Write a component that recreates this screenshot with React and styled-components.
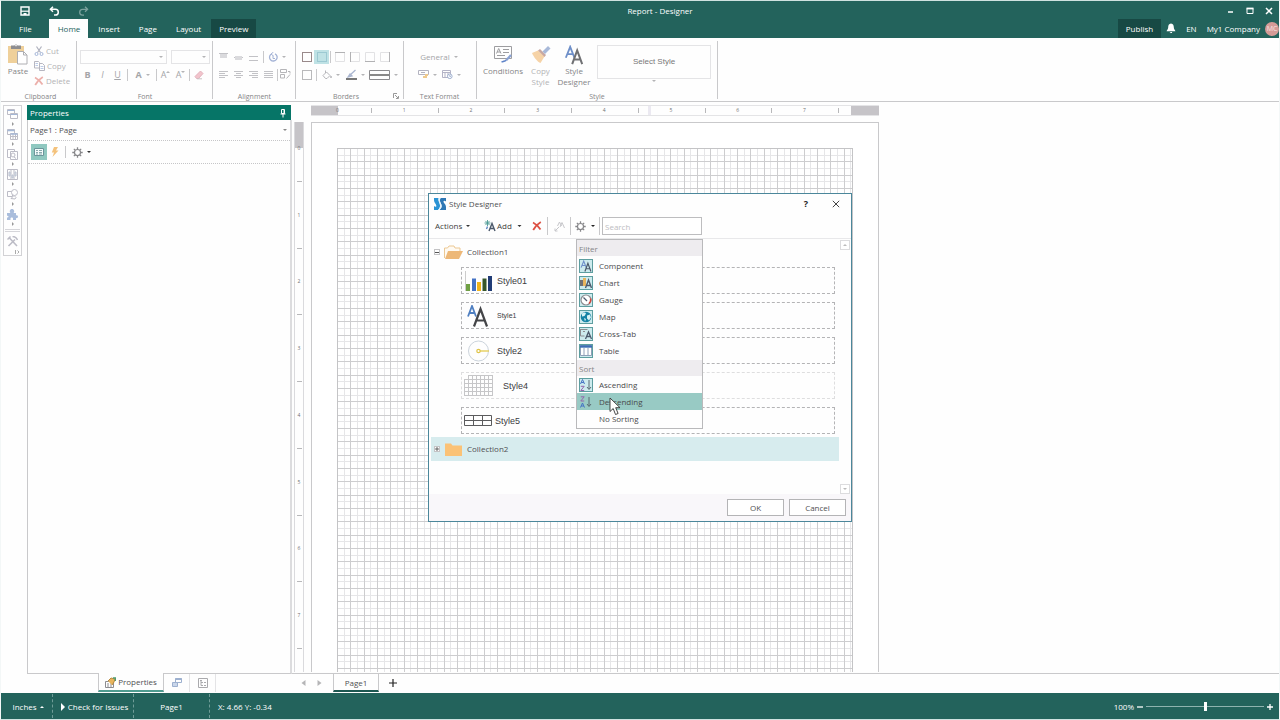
import React from "react";
import styled, { createGlobalStyle, css } from "styled-components";

const c = {
  brand: "#23635c",
  brandDark: "#174944",
  panel: "#067567",
  line: "#c9c9cb",
  soft: "#e4e4e6",
  text: "#505052",
  accent: "#8fc8c0",
  pale: "#d7ecee",
};

const Global = createGlobalStyle`
  *, *::before, *::after { box-sizing: border-box; }
  body { margin: 0; background: #fff; }
  body, button, input, select { font: 8px/10px "Open Sans", "Noto Sans", sans-serif; color: ${c.text}; }
  button { border: 0; padding: 0; background: none; display: inline-flex; align-items: center; justify-content: center; white-space: nowrap; }
  input, select { border-radius: 0; outline: 0; margin: 0; }
  svg { display: block; flex: none; }
  h1, h2, ul { margin: 0; padding: 0; font: inherit; list-style: none; }
`;

/* ---------- frame ---------- */
const Window = styled.div`
  display: flex; flex-direction: column; height: 100vh; min-height: 560px; overflow: hidden;
  border: 1px solid #cfe2e0; border-left-color: #f3f7f7; border-right-color: #f3f7f7; background: #fefefe;
`;
const Header = styled.header`background: ${c.brand}; color: #fff; flex: none;`;
const TitleBar = styled.div`
  display: grid; grid-template-columns: 1fr auto 1fr; align-items: center; height: 18px; padding-right: 4px; padding-left: 18px;
`;
const Quick = styled.div`display: flex; gap: 17px; padding-top: 2px;`;
const TitleBtn = styled.button`width: 12px; height: 14px; color: #fff; opacity: ${(p) => (p.$dim ? 0.4 : 1)};`;
const WinBtns = styled.div`display: flex; gap: 7px; justify-content: flex-end; padding-top: 2px;`;
const AppTitle = styled.h1`color: #fff; padding-left: 26px; padding-top: 2px;`;
const TabBar = styled.nav`display: flex; height: 19px; align-items: stretch;`;
const RibbonTab = styled.button`
  padding: 0 9px 0 10px; color: #fff; margin-right: ${(p) => (p.$file ? 8 : 0)}px; margin-left: ${(p) => (p.$file ? 8 : 0)}px;
  ${(p) => p.$active && css`background: #fefefe; color: ${c.brand}; padding: 0 8px 0 9px;`}
  ${(p) => p.$dark && css`background: ${c.brandDark}; padding: 0 8px; margin-left: 1px;`}
`;
const Account = styled.div`margin-left: auto; display: flex; align-items: center;`;
const Publish = styled.button`align-self: stretch; padding: 0 8px; background: ${c.brandDark}; color: #fff;`;
const AccountBtn = styled.button`color: #fff; padding: 0 5px;`;
const Avatar = styled.span`
  width: 14px; height: 14px; border-radius: 50%; background: #d49b97; color: #f8e4e2; font-size: 7px;
  display: grid; place-items: center;
`;

/* ---------- ribbon ---------- */
const Ribbon = styled.section`display: flex; height: 64px; border-bottom: 1px solid ${c.line}; flex: none;`;
const Group = styled.div`
  display: flex; flex-direction: column; width: ${(p) => p.$w}px; padding: ${(p) => p.$top ?? 11}px 2px 0 ${(p) => p.$left ?? 3}px; gap: 3px; position: relative;
`;
const GroupName = styled.div`
  margin-top: auto; display: flex; justify-content: center; font-size: 7px; line-height: 9px; color: #858587; position: relative;
  padding-right: ${(p) => p.$pr ?? 0}px;
`;
const Launcher = styled.button`position: absolute; right: 2px; top: 1px;`;
const GroupLine = styled.div`width: 1px; margin: 3px 0 2px; background: ${c.line};`;
const Row = styled.div`display: flex; align-items: center; height: 15px; gap: ${(p) => p.$gap ?? 0}px;`;
const Tool = styled.button`
  width: ${(p) => p.$w ?? 15}px; height: 14px; gap: ${(p) => p.$gap ?? 4}px; color: #a5a5a8; flex: none;
  background: ${(p) => (p.$on ? "#bfe2e5" : "none")};
`;
const Glyph = styled.span`font-size: ${(p) => p.$s ?? 9}px; font-weight: ${(p) => (p.$b ? 700 : 400)}; font-style: ${(p) => (p.$i ? "italic" : "normal")}; text-decoration: ${(p) => (p.$u ? "underline" : "none")};`;
const MiniLine = styled.span`width: 1px; height: 12px; background: ${c.line}; margin: 0 ${(p) => p.$m ?? 2}px; flex: none;`;
const Caret = styled.span`
  width: 0; height: 0; border: 2px solid transparent; border-bottom-width: 0; border-top-color: ${(p) => p.$c ?? "#b4b4b6"};
  ${(p) => p.$up && css`border-bottom: 2px solid ${p.$c ?? "#b4b4b6"}; border-top-width: 0;`}
  ${(p) => p.$right && css`border: 2px solid transparent; border-right-width: 0; border-left-color: ${p.$c};`}
  ${(p) => p.$high && css`margin-bottom: 6px;`}
`;
const SelectWrap = styled.label`
  display: flex; align-items: center; position: relative; width: ${(p) => p.$w ? p.$w + "px" : "100%"}; height: ${(p) => p.$h ?? 14}px;
  border: ${(p) => (p.$plain ? "0" : `1px solid ${c.soft}`)}; padding-right: 3px;
  select { appearance: none; border: 0; background: none; flex: 1; min-width: 0; padding: 0 0 0 2px; height: 100%; color: inherit; }
`;
const Clip = styled.div`display: flex; gap: ${(p) => p.$gap ?? 5}px;`;
const BigBtn = styled.button`
  flex-direction: column; justify-content: flex-start; width: ${(p) => p.$w}px; color: ${(p) => (p.$dim ? "#b3b3b5" : "#858587")};
  line-height: 11px; white-space: normal; align-self: flex-start;
`;
const ClipList = styled.div`display: flex; flex-direction: column; align-items: flex-start;`;
const ClipBtn = styled.button`height: 15px; gap: 2px; color: #b3b3b5;`;
const Gallery = styled.button`
  width: 114px; height: 34px; border: 1px solid ${c.soft}; font-family: "Liberation Sans", sans-serif; color: #777;
`;
const GalleryBox = styled.div`display: flex; flex-direction: column; align-items: center; gap: 1px; padding-left: 2px;`;

/* ---------- work area ---------- */
const Work = styled.main`display: flex; flex: 1; min-height: 0;`;
const ToolboxCol = styled.aside`width: 26px; padding: 3px 5px 0 2px;`;
const Toolbox = styled.div`
  display: flex; flex-direction: column; align-items: center; border: 1px solid #d2d2d5; width: 19px; min-height: 151px; padding-top: 3px;
`;
const BoxBtn = styled.button`width: 15px; height: ${(p) => (p.$last ? 14 : 20)}px; flex: none; flex-direction: column; gap: 2px; justify-content: flex-start;`;
const DoubleLine = styled.div`height: 3px; flex: none; width: 15px; border: 1px solid #d6d6da; border-left: 0; border-right: 0; margin-bottom: 4px;`;
const More = styled.button`align-self: flex-end; padding-right: 1px; margin-top: auto; padding-bottom: 1px;`;

const Side = styled.aside`width: 265px; padding-top: 3px; display: flex; flex-direction: column; flex: none;`;
const PanelBox = styled.section`flex: 1; border: 1px solid ${c.line}; border-top: 0; border-right: 2px solid #dcdcde;`;
const PanelTitle = styled.h2`
  display: flex; align-items: center; justify-content: space-between; height: 15px; background: ${c.panel}; color: #fff; padding: 1px 5px 0 3px; margin-right: 1px;
`;
const PanelRow = styled.div`display: flex; align-items: center; height: ${(p) => p.$h}px; border-bottom: 1px dotted #c6c6c8; padding-left: ${(p) => p.$pl ?? 0}px;`;
const ModeBtn = styled.button`width: 16px; height: 16px; background: ${(p) => (p.$on ? c.accent : "none")};`;
const SideTabs = styled.div`display: flex; height: 19px; padding-left: 71px; align-items: stretch;`;
const SideTab = styled.button`
  width: ${(p) => (p.$active ? 66 : 26)}px; gap: 2px; border-right: 1px solid ${c.soft}; height: 18px;
  ${(p) => p.$active && css`border: 1px solid ${c.line}; border-top: 0; border-bottom: 2px solid #4f9c90; background: #fefefe; height: 19px; margin-top: -1px; padding-top: 1px;`}
`;

const Canvas = styled.section`flex: 1; min-width: 0; display: flex; flex-direction: column;`;
const CanvasGrid = styled.div`
  flex: 1; min-height: 0; overflow: hidden; display: grid; grid-template-columns: 10px 568px; grid-template-rows: 11px 1fr;
  gap: 6px 7px; padding: 3px 0 1px 2px;
`;
const TopRuler = styled.div`grid-column: 2; border: 1px solid ${c.soft}; border-left: 0; border-right: 0; height: 11px; overflow: hidden;`;
const SideRuler = styled.div`border: 1px solid #dadadd; border-top: 0; border-bottom: 0; overflow: hidden;`;
const Sheet = styled.div`
  border: 1px solid ${c.line}; border-bottom: 0; padding: 25px 25px 0 25px; overflow: hidden; display: flex; background: #fff;
`;
const GridArea = styled.div`flex: 1; border: 1px solid #c4c4c6; border-bottom: 0;`;
const PageTabs = styled.div`
  display: flex; align-items: flex-start; height: 20px; border-top: 1px solid ${c.line}; padding-left: 8px;
`;
const PageTab = styled.button`
  width: 46px; height: 18px; border: 1px solid ${c.line}; border-top: 0; border-bottom: 2px solid #1d5751; margin-right: 8px; padding-top: 2px;
`;

const Status = styled.footer`
  display: flex; align-items: center; height: 26px; background: ${c.brand}; color: #fff; flex: none; padding-right: 6px;
`;
const StatusCell = styled.div`
  width: ${(p) => p.$w}px; height: 24px; display: flex; align-items: center; justify-content: center; border-right: 1px dashed #6f9c97;
  padding: 2px 0 0 ${(p) => p.$pl ?? 3}px;
`;
const StatusBtn = styled.button`color: #fff; gap: 3px;`;
const Coordinates = styled.output`padding: 2px 0 0 8px;`;
const Zoom = styled.div`margin-left: auto; display: flex; align-items: center; gap: 3px; padding-top: 1px;`;
const Slider = styled.input`
  appearance: none; width: 118px; height: 10px; background: none;
  &::-webkit-slider-runnable-track { height: 1px; background: #8fb3af; }
  &::-webkit-slider-thumb { appearance: none; width: 3px; height: 9px; margin-top: -4px; background: #fff; }
`;

/* ---------- dialog ---------- */
const Overlay = styled.div`position: fixed; inset: 0; display: grid; place-items: center; padding-bottom: 5px;`;
const Dialog = styled.section`
  width: 424px; border: 1px solid #4b879b; background: #fefefe; display: flex; flex-direction: column;
`;
const DialogTitle = styled.div`display: flex; align-items: center; gap: 3px; height: 20px; padding: 0 9px 0 5px;`;
const Heading = styled.h2`flex: 1; font-size: 8px; color: ${c.text};`;
const DlgIconBtn = styled.button`width: 12px; height: 14px; margin-left: 15px; color: #222;`;
const DialogBar = styled.div`
  display: flex; align-items: center; height: 25px; padding-left: 6px; border-bottom: 1px solid #e8e8ea;
`;
const BarBtn = styled.button`gap: ${(p) => p.$gap ?? 6}px; width: ${(p) => p.$w}px; height: 18px; justify-content: ${(p) => (p.$start ? "flex-start" : "center")}; color: #3f3f41;`;
const BarLine = styled.span`width: 1px; height: 18px; background: ${c.line};`;
const MenuAnchor = styled.div`position: relative; width: 28px; height: 18px; padding-left: 1px;`;
const Search = styled.input`
  width: 100px; height: 18px; border: 1px solid #bdbdbf; padding: 0 2px; margin-left: 2px; background: #fff;
  &::placeholder { color: #bdbdbf; opacity: 1; }
`;
const DialogBody = styled.div`display: flex; height: 255px; padding-left: 2px;`;
const Tree = styled.ul`flex: 1;`;
const Branch = styled.li`
  display: flex; align-items: center; height: ${(p) => (p.$on ? 24 : 26)}px; padding-left: 3px; margin-top: ${(p) => (p.$on ? 3 : 0)}px;
  background: ${(p) => (p.$on ? c.pale : "none")};
`;
const Expander = styled.button`width: 6px; height: 6px; border: 1px solid #c3c3c5; margin-right: 4px; background: #fff;`;
const BranchName = styled.span`margin-left: 4px;`;
const Items = styled.ul`display: flex; flex-direction: column; gap: 8px; padding: 2px 4px 0 30px;`;
const Item = styled.li`
  height: 27px; border: 1px dashed ${(p) => (p.$faint ? "#dededf" : "#b4b4b6")}; display: flex; align-items: center; padding: 0 2px; gap: ${(p) => p.$gap}px;
  font-family: "Liberation Sans", sans-serif; font-size: ${(p) => p.$s ?? 9}px; color: #3c3c3e;
`;
const Scroll = styled.div`width: 12px; display: flex; flex-direction: column; justify-content: space-between; padding: 1px 0 0 1px;`;
const ScrollBtn = styled.button`width: 10px; height: 10px; border: 1px solid #dcdcde; background: #fff;`;
const DialogFoot = styled.div`display: flex; justify-content: flex-end; gap: 5px; padding: 5px; height: 27px; background: #f9f7fa;`;
const Push = styled.button`width: 57px; height: 17px; border: 1px solid #b4b4b6; background: #fff;`;

const Menu = styled.div`
  position: absolute; left: 5px; top: 22px; z-index: 2; width: 127px; border: 1px solid #b9b9bb; background: #fefefe;
`;
const MenuHead = styled.div`height: 16px; display: flex; align-items: center; padding-left: 2px; background: #eeecef; color: #858587; padding-top: 1px;`;
const MenuList = styled.ul`padding: ${(p) => (p.$filter ? "1px 0" : "0 0 1px")};`;
const MenuRow = styled.li`
  position: relative; display: flex; background: ${(p) => (p.$hot ? "#98cac4" : "none")};
`;
const MenuBtn = styled.button`flex: 1; height: 17px; justify-content: flex-start; gap: 6px; padding-left: 2px; color: #4a4a4c;`;
const MenuIcon = styled.span`
  width: 14px; height: 14px; display: grid; place-items: center;
  ${(p) => p.$on && css`border: 1px solid #5d9ea0; background: #cdebee;`}
`;
const Pointer = styled.span`position: absolute; left: 32px; top: 4px; z-index: 3;`;

/* ---------- drawings ---------- */
const Svg = ({ w = 10, h = w, vb, children, ...r }) => (
  <svg width={w} height={h} viewBox={vb ?? `0 0 ${w} ${h}`} fill="none" stroke="currentColor" aria-hidden="true" {...r}>{children}</svg>
);
const Save = () => <Svg><path d="M1 1h8v8H1z" strokeWidth="1.4" /><path d="M1 5.200h8" strokeWidth="1.200" /><path d="M3.500 7h3v2h-3z" fill="currentColor" stroke="none" /></Svg>;
const Undo = () => <Svg w={11} h={10}><path d="M4 .8 1.400 3.300 4 5.800M1.800 3.300h4.600a2.900 2.900 0 0 1 0 5.800H5" strokeWidth="1.500" /></Svg>;
const Redo = () => <Svg w={11} h={10}><path d="M7 .8l2.600 2.500L7 5.800M9.200 3.300H4.600a2.900 2.900 0 0 0 0 5.800H6" strokeWidth="1.300" /></Svg>;
const Bell = () => <Svg w={10} h={11}><path d="M5 .5c-2.200.300-2.800 2-2.800 3.800C2.200 6.500 1 7 .6 8.200h8.800C9 7 7.800 6.500 7.800 4.300 7.800 2.500 7.200.800 5 .5zM3.800 9h2.400c0 1.600-2.400 1.600-2.400 0z" fill="currentColor" stroke="none" /></Svg>;
const Gear = ({ s = 10, color = "#88888b" }) => (
  <Svg w={s} vb="0 0 12 12" stroke={color}>
    <circle cx="6" cy="6" r="3.300" strokeWidth="1.300" />
    <path d="M6 .3v2M6 9.700v2M.3 6h2M9.700 6h2M2 2l1.400 1.400M8.600 8.600 10 10M10 2 8.600 3.400M3.400 8.600 2 10" strokeWidth="1.400" />
  </Svg>
);
const PasteIcon = () => (
  <Svg w={20} h={22} stroke="none"><rect x="0" y="3" width="16" height="17" fill="#efd09a" /><path d="M3 2.500h3.500a1.700 1.700 0 0 1 3 0H13V6H3z" fill="#8d8d90" /><circle cx="8" cy="2.600" r=".8" fill="#fff" /><path d="M9.500 8.500h6l3.500 3.500v9H9.500z" fill="#fff" stroke="#aeaeb2" /><path d="M15.500 8.500V12H19" stroke="#aeaeb2" fill="none" /></Svg>
);
const Cut = () => <Svg stroke="#aeb0bd"><path d="M2.500.5l4 6M7.500.5l-4 6" strokeWidth="1.200" /><circle cx="2.500" cy="8" r="1.500" stroke="#a5b6d8" /><circle cx="7.500" cy="8" r="1.500" stroke="#a5b6d8" /></Svg>;
const CopyI = () => <Svg w={11} h={10} stroke="#b6b6c0"><path d="M.5.5h4l1 1V7h-5z" /><path d="M5.500 2.500h3l2 2v5h-5z" fill="#fff" /><path d="M6.500 5.500h3M6.500 7.500h3M1.500 2.500H4M1.500 4.500H4" stroke="#bccbe6" /></Svg>;
const Del = ({ color = "#ecb0ab", s = 10 }) => <Svg w={s} vb="0 0 10 10" stroke={color}><path d="M1 1.500c3 1.500 5.500 4.200 7.500 7M8.800 1C5.500 3 3 5.500 1.200 9" strokeWidth="1.800" /></Svg>;
const Eraser = () => <Svg stroke="#e3b3bd"><path d="M1 6.500 6.500 1 9 3.500 4.500 8.500H2.500z" fill="#f2c4cc" /><path d="M3 8.800h5" stroke="#c9c0c4" /></Svg>;
const Lines = ({ d, gray }) => <Svg><path d={d} stroke="#c2c2c6" />{gray && <rect x="1" y={gray} width="7" height="4" fill="#dadadd" stroke="none" />}</Svg>;
const Rotate = () => <Svg stroke="#a4b3d6"><path d="M3 2.200A3.800 3.800 0 1 0 7 1.800" strokeWidth="1.300" /><path d="M5.500 0 3 2l2.500 2M5 3.500v3h2" /></Svg>;
const TextDir = () => <Svg w={11} stroke="#b5b5b8"><path d="M.5.5h6v3h-6zM.5 5.500h4v3.500h-4zM6.500 9.500l3.500-4M8 2.500h2v2" /></Svg>;
const Box = ({ sides = "", color = "#b2b2b4" }) => (
  <Svg stroke="#e2e2e4"><path d="M.5.5h9v9h-9z" />{sides.includes("t") && <path d="M0 .5h10" stroke={color} />}{sides.includes("l") && <path d="M.5 0v10" stroke={color} />}{sides.includes("b") && <path d="M0 9.500h10" stroke={color} />}{sides.includes("r") && <path d="M9.500 0v10" stroke={color} />}</Svg>
);
const Bucket = () => <Svg w={10} stroke="#b5b5b9"><path d="M1 5.500 4.500 2 8 5.500 5 8.500 3.500 8.500zM3.500 3V.5" /><path d="M9 6v2" strokeWidth="1.500" /></Svg>;
const Pen = () => <Svg w={11} h={11} stroke="#aab6d0"><path d="M3 7 9.500 1M2 8l2-3 2 2z" strokeWidth="1.300" /><path d="M0 10h11" stroke="#777" strokeWidth="2" /></Svg>;
const LineStyle = () => <Svg w={21} h={10} stroke="#8b8b8e"><path d="M.5.5h20v9H.5z" /><path d="M1 5h19" strokeWidth="1.400" stroke="#555" /></Svg>;
const Money = () => <Svg w={11} stroke="#b3b3c0"><path d="M.5 1.500h10v4H.5zM3 3.500h4" /><path d="M7 6h3M5 8h4" stroke="#eec98d" strokeWidth="2" /></Svg>;
const Cal = () => <Svg w={11} stroke="#b3b3c6"><path d="M.5 1.500h8v7h-8zM.5 3.500h8M3 4v5M6 4v5" /><circle cx="7.800" cy="7.300" r="2.300" fill="#fff" stroke="#9fb0cf" /><path d="M7.800 6v1.500h1" stroke="#9fb0cf" /></Svg>;
const Conditions = () => (
  <Svg w={20} h={20} stroke="#9d9da0"><path d="M1.500 1.500h17v12h-17z" /><path d="M3.500 8.500 5.700 3.500 8 8.500M4.200 7h3M10 4.500h6M10 7.500h6M4 10.500h8" /><path d="M13 15.500 18 10" stroke="#8aa2d3" strokeWidth="2.200" /><path d="M8.500 16.800c2 0 3-1.300 4.500-1" stroke="#5e83c8" strokeWidth="1.500" /></Svg>
);
const Brush = () => (
  <Svg w={20} h={20} stroke="none"><path d="M1 8l6-2.500 6.500 6L9.500 18c-3-1-6.500-5.500-8.500-10z" fill="#f6d3a7" /><path d="M7 5.500l2-1.500 6 6-1.500 2z" fill="#c9a8a0" /><path d="M11.500 6.500 17 1l2.500 2.500L14 9z" fill="#a8b9d9" /></Svg>
);
const AA = ({ w = 20, h = 22, a = "#6e8fc9", b = "#707174" }) => (
  <Svg w={w} h={h} vb="0 0 20 22"><path d="M1 14 5.800 2 10.500 14M2.800 10h6" stroke={a} strokeWidth="2" /><path d="M8 21 13.500 6 19 21M10 16h7" stroke={b} strokeWidth="2.200" /></Svg>
);
const Pin = () => <Svg w={6} h={9} stroke="#fff"><path d="M1.500.5h3v4h-3zM.5 5h5M3 5v3.500M4 1v4" /></Svg>;
const PropGrid = () => <Svg w={10} h={8} stroke="#6b959b"><path d="M.5.5h9v7h-9z" fill="#f4fbfb" /><path d="M2 2.500h2M5 2.500h3M2 4.500h2M5 4.500h3M2 6h2M5 6h3" strokeWidth=".8" /></Svg>;
const Bolt = () => <Svg w={8} h={10} stroke="none"><path d="M3 0h4L5 3.500h2.500L1.500 10 3 5.500H.8z" fill="#f4c27c" /></Svg>;
const toolIcons = [
  <><path d="M.5.5h7v5h-7z" /><path d="M3.500 4.500h7v5h-7z" fill="#fff" /><path d="M3.500 5.500h7M.5 1.500h7" stroke="#a4b7d6" /></>,
  <><path d="M.5.5h7v5h-7z" /><path d="M3.500 4.500h7v6h-7zM6 5v5M8.500 5v5M4 7.500h6" fill="#fff" /><path d="M3.500 5h7M.5 1.500h7" stroke="#a4b7d6" strokeWidth="1.500" /></>,
  <><path d="M.5.5h7v8h-7z" /><path d="M3.500 2.500h7v8h-7z" fill="#fff" /><circle cx="6" cy="6" r="2" /><path d="M7 8l2 1.500" /></>,
  <><path d="M.5.500h10v10H.5zM4 1v9M7 1v9" /><path d="M2 3h1v4H2zM5 6h1v3H5zM8 3h1v4H8z" stroke="#b8c0d0" /></>,
  <><path d="M.5 2.500h5v5h-5z" /><circle cx="7.500" cy="3.500" r="3" fill="#fff" /><path d="M4 9.500l3-3 2 2-1 1.500z" fill="#fff" /></>,
  <><path d="M0 4h3.500C2 2.500 3 0 5 0s3 2.500 1.500 4H9v2.500c1-.5 2 .2 2 1.200s-1 1.800-2 1.300v2H6V9.500c0-1.200-2.500-1.200-2.500 0V11H0V8.500c2 .5 2-2.300 0-1.800z" fill="#a9bddc" stroke="none" /></>,
  <><path d="M1.500 10 8 3.500M2 1.500l8 8.500" strokeWidth="1.600" /><path d="M5.500.5c2.500 0 4 1 5 3.500M.5 3.500l3-3" strokeWidth="1.500" /></>,
];
const ToolIcon = ({ i }) => <Svg w={11} h={11} stroke="#bcbcc6">{toolIcons[i]}</Svg>;
const PropsTabIcon = () => <Svg w={11} h={11} stroke="#8c8c90"><path d="M.5 4.500h8v6h-8zM2 7h2M5 7h2M2 9h2M5 9h2" /><path d="M3 4l3-3 4 1-1 3-2 3" fill="#e8b45c" stroke="#b98a3d" /><path d="M8 1h2.500v3" stroke="#4f9c70" strokeWidth="1.500" /></Svg>;
const DictIcon = () => <Svg w={10} stroke="#9db0cf"><path d="M3.500.5h6v4h-6z" /><path d="M.5 4.500h5v4h-5z" fill="#c9d6ea" /><path d="M3.500 1h6" strokeWidth="2" /></Svg>;
const TreeIcon = () => <Svg w={10} stroke="#aaaaad"><path d="M.5.500h9v9h-9zM3 2v5.500h2M3 4.500h2M2 2.500h2M6 4.500h2M6 7.500h2" /></Svg>;
const Logo = () => (
  <Svg w={12} h={12} stroke="none">
    <path d="M0 0h4.500C3.500 3.500 6.500 5 6 8.500 5.800 10 5 11 4 12H0V8c1 1 2 1 2.300.2C2.800 6.500 0 5 0 2z" fill="#2a93d4" />
    <path d="M6.500 0H12v3.500c-1-1-2.300-1-2.500 0C9.200 5 12 6 12 9v3H5.500C7 10.500 8 9 7.500 7 7 5 5 3.500 6.500 0z" fill="#2f78b5" />
    <path d="M5 0h1.500C5 3.500 7 5 7.500 7 8 9 7 10.500 5.500 12H4c1-1 1.800-2 2-3.500C6.500 5 4 3.500 5 0z" fill="#e8f4fb" />
  </Svg>
);
const AddIcon = () => <Svg w={12} h={12}><path d="M3.500 0v6M.5 3h6M1.400.900l4.200 4.200M5.600.900 1.400 5.100" stroke="#4d9a94" strokeWidth=".9" /><path d="M5 11 8 3.500 11 11M6 8.500h4" stroke="#4d5a6c" strokeWidth="1.400" /><path d="M2.500 9 3.500 6.500" stroke="#557fc0" strokeWidth="1.300" /></Svg>;
const Folder = ({ open }) => open
  ? <Svg w={19} h={15} stroke="none"><path d="M.5 13V3h3l1.500-2h5l1 2h5v3" fill="#fffaf2" stroke="#ecc893" /><path d="M4 6h15l-4 8H1z" fill="#edb878" /></Svg>
  : <Svg w={19} h={15} stroke="none"><path d="M1 1.500h6l1.500 2H18V14H1z" fill="#fbc276" /></Svg>;
const Bars = () => (
  <Svg w={29} h={22} stroke="none"><path d="M1.500 1v20" stroke="#ccc" /><path d="M2 14h4v7H2z" fill="#6fa043" /><path d="M8 8.500h4V21H8z" fill="#4472c4" /><path d="M13 12h4v9h-4z" fill="#f0b41c" /><path d="M18.500 8.500h4V21h-4z" fill="#37562a" /><path d="M24 6h4v15h-4z" fill="#213c76" /></Svg>
);
const AAStyle = () => <Svg w={29} h={22}><path d="M4 11.500 8 1l4 10.500M5.500 8h5" stroke="#4f7fc1" strokeWidth="1.800" /><path d="M10 21.500 16.500 4 23 21.500M12.500 15.500h8" stroke="#444548" strokeWidth="2.200" /></Svg>;
const GaugeStyle = () => <Svg w={29} h={22}><circle cx="14.500" cy="11" r="10" stroke="#ccd4dc" /><path d="M16 11h9" stroke="#e5cf5c" strokeWidth="1.400" /><circle cx="14.500" cy="11" r="1.700" fill="#fff" stroke="#dfc44a" strokeWidth="1.200" /></Svg>;
const CrossStyle = () => <Svg w={29} h={22} stroke="#c6c6c8"><path d="M4.500.5h24M.5 4.500h28M.5 8.500h28M.5 12.500h28M.5 16.500h28M.5 20.500h28M.5 4v17M4.500 0v21M8.500 0v21M12.500 0v21M16.500 0v21M20.500 0v21M24.500 0v21M28.500 0v21" /></Svg>;
const TableStyle = () => <Svg w={28} h={11} stroke="#5b5b5d"><path d="M.5.5h27v10H.5zM0 5.500h28M9.500 0v11M18.500 0v11" /></Svg>;
const ChartM = () => <Svg w={12} h={12}><path d="M0 3h3v6H0z" fill="#707074" stroke="none" /><path d="M3 1h3v8H3z" fill="#e8b45c" stroke="none" /><path d="M5.500 11 8.500 3l3 8M6.500 8.500h4" stroke="#4d5a6c" strokeWidth="1.400" /></Svg>;
const GaugeM = () => <Svg w={12} h={12}><circle cx="6" cy="6" r="5" fill="#fff" stroke="#8b8b90" strokeWidth="1.200" /><path d="M10.500 4.500a5 5 0 0 1-1.500 5" stroke="#d4463c" strokeWidth="1.500" /><path d="M3.500 3.500 7 7" stroke="#4d5a6c" strokeWidth="1.300" /></Svg>;
const GlobeM = () => <Svg w={12} h={12} stroke="none"><circle cx="6" cy="6" r="5.300" fill="#1583a5" /><path d="M2 2.500C4 1 5.500 1.500 6 2.500L4.500 5 2 5.500zM7 4.500l3-1 1 3-2 3-2-2zM4 7l2 1-1 2.500z" fill="#d8f2f5" /></Svg>;
const CrossM = () => <Svg w={12} h={12} stroke="#8c8c90"><path d="M.5 1.500h7M.5 1v7h4M3 3.500h2" /><path d="M5.500 11 8.500 4l3 7M6.500 8.500h4" stroke="#4d5a6c" strokeWidth="1.300" /></Svg>;
const TableM = () => <Svg w={12} h={11} stroke="#8fa0b8"><path d="M.5.5h11v10H.5zM4 3v7M8 3v7" fill="#fff" /><path d="M0 1.500h12" stroke="#3d6db5" strokeWidth="2.400" /></Svg>;
const SortM = ({ desc }) => {
  const up = "M.5 5 2.500.5 4.500 5M1.200 3.500h2.600";
  const zig = "M.8.8h3.400L.8 5h3.400";
  return (
    <Svg w={12} h={12}><path d={desc ? zig : up} stroke={desc ? "#9467ab" : "#4472c4"} /><path d={desc ? up : zig} transform="translate(0 6.500)" stroke={desc ? "#4472c4" : "#9467ab"} /><path d="M9 1v9M7 8l2 2.500L11 8" stroke="#5b6b72" /></Svg>
  );
};

const marks = Array.from({ length: 8 }, (_, i) => i);
const rulerText = { fontSize: 5, fill: "#707072", stroke: "none", textAnchor: "middle" };

const bordersRow = ["t", "l", "b", "r"];
const filters = [
  ["Component", <AA w={12} h={12} b="#4d5a6c" />], ["Chart", <ChartM />], ["Gauge", <GaugeM />],
  ["Map", <GlobeM />], ["Cross-Tab", <CrossM />], ["Table", <TableM />],
];
const sorts = [["Ascending", <SortM />, true], ["Descending", <SortM desc />], ["No Sorting", null]];

function RibbonBar() {
  return (
    <Ribbon>
      <Group $w={75} $top={5} $left={6}>
        <Clip>
          <BigBtn $w={22}><PasteIcon /><span>Paste</span></BigBtn>
          <ClipList>
            <ClipBtn><Cut />Cut</ClipBtn><ClipBtn><CopyI />Copy</ClipBtn><ClipBtn><Del />Delete</ClipBtn>
          </ClipList>
        </Clip>
        <GroupName>Clipboard</GroupName>
      </Group>
      <GroupLine />
      <Group $w={135}>
        <Row $gap={4}>
          <SelectWrap $w={87}><select aria-label="Font family"><option></option></select><Caret /></SelectWrap>
          <SelectWrap $w={39}><select aria-label="Font size"><option></option></select><Caret /></SelectWrap>
        </Row>
        <Row>
          <Tool aria-label="Bold"><Glyph $b>B</Glyph></Tool>
          <Tool aria-label="Italic"><Glyph $i>I</Glyph></Tool>
          <Tool aria-label="Underline"><Glyph $u>U</Glyph></Tool>
          <MiniLine />
          <Tool $w={25} aria-label="Text colour"><Glyph $b>A</Glyph><Caret /></Tool>
          <MiniLine $m={1} />
          <Tool $gap={0} aria-label="Grow font"><Glyph>A</Glyph><Caret $up $high /></Tool>
          <Tool $gap={0} aria-label="Shrink font"><Glyph>A</Glyph><Caret $high /></Tool>
          <MiniLine $m={1} />
          <Tool aria-label="Clear format"><Eraser /></Tool>
        </Row>
        <GroupName>Font</GroupName>
      </Group>
      <GroupLine />
      <Group $w={82}>
        <Row>
          <Tool aria-label="Top"><Lines d="M0 1.500h9" gray={2} /></Tool>
          <Tool aria-label="Middle"><Lines d="M0 5.500h9" gray={4} /></Tool>
          <Tool aria-label="Bottom"><Lines d="M0 4.500h9M0 8.500h9" /></Tool>
          <MiniLine />
          <Tool $w={22} aria-label="Rotate"><Rotate /><Caret /></Tool>
        </Row>
        <Row>
          <Tool aria-label="Align left"><Lines d="M0 1.500h9M0 3.500h6M0 5.500h9M0 7.500h6" /></Tool>
          <Tool aria-label="Align center"><Lines d="M0 1.500h9M2 3.500h5M0 5.500h9M2 7.500h5" /></Tool>
          <Tool aria-label="Align right"><Lines d="M0 1.500h9M3 3.500h6M0 5.500h9M3 7.500h6" /></Tool>
          <Tool aria-label="Justify"><Lines d="M0 1.500h9M0 3.500h9M0 5.500h9M0 7.500h9" /></Tool>
          <MiniLine $m={1} />
          <Tool $w={13} aria-label="Text wrap"><TextDir /></Tool>
        </Row>
        <GroupName>Alignment</GroupName>
      </Group>
      <GroupLine />
      <Group $w={107}>
        <Row>
          <Tool aria-label="All borders"><Box sides="tlbr" color="#99898a" /></Tool>
          <Tool $on aria-label="No border"><Box sides="tlbr" color="#9cc9d2" /></Tool>
          <MiniLine $m={1} />
          {bordersRow.map((s) => <Tool key={s} aria-label={"Border " + s}><Box sides={s} /></Tool>)}
        </Row>
        <Row>
          <Tool aria-label="Shadow"><Box sides="tlbr" color="#b9b9bb" /></Tool>
          <MiniLine />
          <Tool $w={24} aria-label="Fill"><Bucket /><Caret /></Tool>
          <Tool $w={25} aria-label="Border colour"><Pen /><Caret /></Tool>
          <Tool $w={30} aria-label="Border style"><LineStyle /><Caret /></Tool>
        </Row>
        <GroupName $pr={8}>Borders<Launcher aria-label="Border settings"><Svg w={6} h={6} stroke="#999"><path d="M.5 5V.5H4M2 2l3 3M5.500 3v2.500H3" /></Svg></Launcher></GroupName>
      </Group>
      <GroupLine />
      <Group $w={72} $left={11}>
        <Row><Tool $w={48} aria-label="Number format"><span>General</span><Caret /></Tool></Row>
        <Row><Tool $w={24} aria-label="Currency"><Money /><Caret /></Tool><Tool $w={24} aria-label="Date"><Cal /><Caret /></Tool></Row>
        <GroupName $pr={10}>Text Format</GroupName>
      </Group>
      <GroupLine />
      <Group $w={240} $top={7} $left={6}>
        <Clip>
          <BigBtn $w={40}><Conditions />Conditions</BigBtn>
          <BigBtn $w={25} $dim><Brush />Copy Style</BigBtn>
          <BigBtn $w={32}><AA h={20} />Style Designer</BigBtn>
          <GalleryBox><Gallery>Select Style</Gallery><Caret /></GalleryBox>
        </Clip>
        <GroupName $pr={4}>Style</GroupName>
      </Group>
      <GroupLine />
    </Ribbon>
  );
}

function StyleDialog() {
  return (
    <Overlay>
      <Dialog role="dialog" aria-label="Style Designer">
        <DialogTitle>
          <Logo /><Heading>Style Designer</Heading>
          <DlgIconBtn aria-label="Help"><Glyph $b>?</Glyph></DlgIconBtn>
          <DlgIconBtn aria-label="Close"><Svg w={8} stroke="#444"><path d="M.8.8l6.400 6.400M7.200.8.8 7.200" /></Svg></DlgIconBtn>
        </DialogTitle>
        <DialogBar>
          <BarBtn $w={49} $start $gap={4}>Actions<Caret $c="#333" /></BarBtn>
          <BarBtn $w={42} $start $gap={1}><AddIcon />Add<Svg w={10} h={4} stroke="none"><path d="M4.500 1h4l-2 2z" fill="#333" /></Svg></BarBtn>
          <BarBtn $w={21} aria-label="Delete"><Del color="#dd5144" /></BarBtn>
          <BarLine />
          <BarBtn $w={22} aria-label="Apply style"><Svg w={11} h={11} stroke="#c6c6ca"><path d="M3.500 5 5.500 1l2 4M6 6l2-4.500L10.500 7M1 10l4-4M1 7.500V10h2.500" /></Svg></BarBtn>
          <BarLine />
          <MenuAnchor>
            <BarBtn $w={26} aria-label="Filter and sort" $gap={5}><Gear s={11} /><Caret $c="#222" /></BarBtn>
            <Menu>
              <MenuHead>Filter</MenuHead>
              <MenuList $filter>
                {filters.map(([n, i]) => <MenuRow key={n}><MenuBtn><MenuIcon $on>{i}</MenuIcon>{n}</MenuBtn></MenuRow>)}
              </MenuList>
              <MenuHead>Sort</MenuHead>
              <MenuList>
                {sorts.map(([n, i, on]) => (
                  <MenuRow key={n} $hot={n === "Descending"}>
                    <MenuBtn><MenuIcon $on={on}>{i}</MenuIcon>{n}</MenuBtn>
                    {n === "Descending" && (
                      <Pointer><Svg w={14} h={20} stroke="#333"><path d="M1 1v13.500l3.200-3 2.300 6 2.600-1-2.400-5.800H11z" fill="#fff" strokeWidth=".9" /></Svg></Pointer>
                    )}
                  </MenuRow>
                ))}
              </MenuList>
            </Menu>
          </MenuAnchor>
          <BarLine />
          <Search placeholder="Search" aria-label="Search" />
        </DialogBar>
        <DialogBody>
          <Tree>
            <Branch><Expander aria-label="Collapse"><Svg w={4} h={4} stroke="#555"><path d="M0 2.500h4" /></Svg></Expander><Folder open /><BranchName>Collection1</BranchName></Branch>
            <li>
              <Items>
                <Item $gap={4}><Bars />Style01</Item>
                <Item $gap={4} $s={7}><AAStyle />Style1</Item>
                <Item $gap={4}><GaugeStyle />Style2</Item>
                <Item $gap={10} $faint><CrossStyle />Style4</Item>
                <Item $gap={3}><TableStyle />Style5</Item>
              </Items>
            </li>
            <Branch $on><Expander aria-label="Expand"><Svg w={4} h={4} stroke="#444"><path d="M0 2h4M2 0v4" strokeWidth=".8" /></Svg></Expander><Folder /><BranchName>Collection2</BranchName></Branch>
          </Tree>
          <Scroll><ScrollBtn aria-label="Scroll up"><Caret $up $c="#bbb" /></ScrollBtn><ScrollBtn aria-label="Scroll down"><Caret $c="#bbb" /></ScrollBtn></Scroll>
        </DialogBody>
        <DialogFoot><Push>OK</Push><Push>Cancel</Push></DialogFoot>
      </Dialog>
    </Overlay>
  );
}

export default function App() {
  return (
    <>
      <Global />
      <Window>
        <Header>
          <TitleBar>
            <Quick>
              <TitleBtn aria-label="Save"><Save /></TitleBtn><TitleBtn aria-label="Undo"><Undo /></TitleBtn><TitleBtn $dim aria-label="Redo"><Redo /></TitleBtn>
            </Quick>
            <AppTitle>Report - Designer</AppTitle>
            <WinBtns>
              <TitleBtn aria-label="Minimize"><Svg w={8}><path d="M1 5h5" strokeWidth="1.500" /></Svg></TitleBtn>
              <TitleBtn aria-label="Maximize"><Svg w={8}><path d="M1 1.500h6v5H1z" /><path d="M.5 1.500h7" strokeWidth="1.800" /></Svg></TitleBtn>
              <TitleBtn aria-label="Close window"><Svg w={8}><path d="M1 1l6 6M7 1 1 7" strokeWidth="1.500" /></Svg></TitleBtn>
            </WinBtns>
          </TitleBar>
          <TabBar>
            <RibbonTab $file>File</RibbonTab><RibbonTab $active>Home</RibbonTab><RibbonTab>Insert</RibbonTab><RibbonTab>Page</RibbonTab><RibbonTab>Layout</RibbonTab><RibbonTab $dark>Preview</RibbonTab>
            <Account>
              <Publish>Publish</Publish>
              <AccountBtn aria-label="Notifications"><Bell /></AccountBtn>
              <AccountBtn>EN</AccountBtn><AccountBtn>My1 Company</AccountBtn><Avatar>MC</Avatar>
            </Account>
          </TabBar>
        </Header>
        <RibbonBar />
        <Work>
          <ToolboxCol>
            <Toolbox>
              {[0, 1, 2, 3, 4, 5].map((i) => <BoxBtn key={i} aria-label={"Component group " + (i + 1)}><ToolIcon i={i} /><Caret $right $c="#999" /></BoxBtn>)}
              <DoubleLine />
              <BoxBtn $last aria-label="Setup toolbox"><ToolIcon i={6} /></BoxBtn>
              <More aria-label="More"><Svg w={5} h={4} stroke="#aaa"><path d="M.5 0v4M2.500.5l1.500 1.500-1.500 1.500" /></Svg></More>
            </Toolbox>
          </ToolboxCol>
          <Side>
            <PanelTitle>Properties<Pin /></PanelTitle>
            <PanelBox>
              <PanelRow $h={21}><SelectWrap $plain $h={18}><select aria-label="Selected component"><option>Page1 : Page</option></select><Caret $c="#888" /></SelectWrap></PanelRow>
              <PanelRow $h={23} $pl={3}>
                <ModeBtn $on aria-label="Properties"><PropGrid /></ModeBtn><ModeBtn aria-label="Events"><Bolt /></ModeBtn><MiniLine $m={2} />
                <BarBtn $w={26} $gap={4} aria-label="Settings"><Gear s={11} /><Caret $c="#333" /></BarBtn>
              </PanelRow>
            </PanelBox>
            <SideTabs>
              <SideTab $active><PropsTabIcon />Properties</SideTab><SideTab aria-label="Dictionary"><DictIcon /></SideTab><SideTab aria-label="Report tree"><TreeIcon /></SideTab>
            </SideTabs>
          </Side>
          <Canvas>
            <CanvasGrid>
              <TopRuler>
                <svg width="568" height="9">
                  <rect width="27" height="9" fill="#c6c4c8" /><rect x="540" width="28" height="9" fill="#c6c4c8" /><rect x="337" width="3" height="9" fill="#ebe9f1" />
                  {marks.map((n) => (
                    <g key={n}><text x={26.500 + n * 66.700} y="6" {...rulerText}>{n}</text><path d={`M${Math.round(60 + n * 66.700) + 0.500} 2v5`} stroke="#b8b8ba" /></g>
                  ))}
                </svg>
              </TopRuler>
              <SideRuler>
                <svg width="8" height="640">
                  <rect width="8" height="26" fill="#c6c4c8" />
                  {marks.map((n) => (
                    <g key={n}><text x="4" y={28 + n * 66.700} {...rulerText}>{n}</text><path d={`M2 ${Math.round(59 + n * 66.700) + 0.500}h5`} stroke="#b8b8ba" /></g>
                  ))}
                </svg>
              </SideRuler>
              <Sheet>
                <GridArea>
                  <svg width="100%" height="100%">
                    <defs>
                      <pattern id="cells" width="40" height="40" patternUnits="userSpaceOnUse" x="-1" y="-1">
                        <path d="M7.500 0v40M20.500 0v40M33.500 0v40M0 7.500h40M0 20.500h40M0 33.500h40" stroke="#e6e6e8" />
                        <path d="M.5 0v40M13.500 0v40M27.500 0v40M0 .5h40M0 13.500h40M0 27.500h40" stroke="#cdcdcf" />
                      </pattern>
                    </defs>
                    <rect width="100%" height="100%" fill="url(#cells)" />
                  </svg>
                </GridArea>
              </Sheet>
            </CanvasGrid>
            <PageTabs>
              <BarBtn $w={6} aria-label="Previous page"><Svg w={5} h={6} stroke="none"><path d="M4.500 0v6L.5 3z" fill="#b5b5b7" /></Svg></BarBtn>
              <BarBtn $w={27} aria-label="Next page"><Svg w={5} h={6} stroke="none"><path d="M.5 0v6l4-3z" fill="#b5b5b7" /></Svg></BarBtn>
              <PageTab>Page1</PageTab>
              <BarBtn $w={12} aria-label="Add page"><Svg w={8} stroke="#222"><path d="M4 0v8M0 4h8" strokeWidth="1.200" /></Svg></BarBtn>
            </PageTabs>
          </Canvas>
        </Work>
        <Status>
          <StatusCell $w={52}><StatusBtn>Inches<Caret $up $c="#fff" /></StatusBtn></StatusCell>
          <StatusCell $w={81}><StatusBtn><Svg w={4} h={8} stroke="none"><path d="M0 0v8l4-4z" fill="#fff" /></Svg>Check for Issues</StatusBtn></StatusCell>
          <StatusCell $w={76} $pl={0}>Page1</StatusCell>
          <Coordinates>X: 4.66 Y: -0.34</Coordinates>
          <Zoom>
            100%
            <StatusBtn aria-label="Zoom out"><Svg w={6}><path d="M0 3h6" strokeWidth="1.300" /></Svg></StatusBtn>
            <Slider type="range" min="0" max="200" defaultValue="100" aria-label="Zoom" />
            <StatusBtn aria-label="Zoom in"><Svg w={6}><path d="M0 3h6M3 0v6" strokeWidth="1.300" /></Svg></StatusBtn>
          </Zoom>
        </Status>
      </Window>
      <StyleDialog />
    </>
  );
}
